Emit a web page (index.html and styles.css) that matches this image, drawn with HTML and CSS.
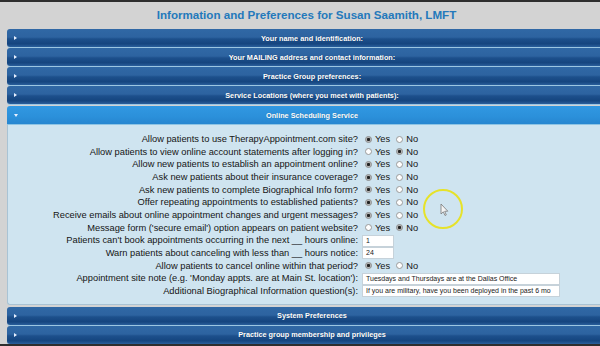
FILE: index.html
```html
<!DOCTYPE html>
<html>
<head>
<meta charset="utf-8">
<link rel="stylesheet" href="styles.css">
</head>
<body>
<div class="frame">
  <h1 class="title">Information and Preferences for Susan Saamith, LMFT</h1>
  <div class="accordion">
    <div class="bar"><span class="arrow"></span><span class="bar-text">Your name and identification:</span></div>
    <div class="bar"><span class="arrow"></span><span class="bar-text">Your MAILING address and contact information:</span></div>
    <div class="bar"><span class="arrow"></span><span class="bar-text">Practice Group preferences:</span></div>
    <div class="bar"><span class="arrow"></span><span class="bar-text">Service Locations (where you meet with patients):</span></div>
    <div class="bar active"><span class="arrow down"></span><span class="bar-text">Online Scheduling Service</span></div>
    <div class="panel">
      <div class="form">
        <div class="lbl">Allow patients to use TherapyAppointment.com site?</div>
        <div class="val"><span class="radio on"></span>Yes<span class="radio"></span>No</div>
        <div class="lbl">Allow patients to view online account statements after logging in?</div>
        <div class="val"><span class="radio"></span>Yes<span class="radio on"></span>No</div>
        <div class="lbl">Allow new patients to establish an appointment online?</div>
        <div class="val"><span class="radio on"></span>Yes<span class="radio"></span>No</div>
        <div class="lbl">Ask new patients about their insurance coverage?</div>
        <div class="val"><span class="radio on"></span>Yes<span class="radio"></span>No</div>
        <div class="lbl">Ask new patients to complete Biographical Info form?</div>
        <div class="val"><span class="radio on"></span>Yes<span class="radio"></span>No</div>
        <div class="lbl">Offer repeating appointments to established patients?</div>
        <div class="val"><span class="radio on"></span>Yes<span class="radio"></span>No</div>
        <div class="lbl">Receive emails about online appointment changes and urgent messages?</div>
        <div class="val"><span class="radio on"></span>Yes<span class="radio"></span>No</div>
        <div class="lbl">Message form ('secure email') option appears on patient website?</div>
        <div class="val"><span class="radio"></span>Yes<span class="radio on"></span>No</div>
        <div class="lbl">Patients can't book appointments occurring in the next __ hours online:</div>
        <div class="val"><span class="box small">1</span></div>
        <div class="lbl">Warn patients about canceling with less than __ hours notice:</div>
        <div class="val"><span class="box small">24</span></div>
        <div class="lbl">Allow patients to cancel online within that period?</div>
        <div class="val"><span class="radio on"></span>Yes<span class="radio"></span>No</div>
        <div class="lbl">Appointment site note (e.g. 'Monday appts. are at Main St. location'):</div>
        <div class="val"><span class="box wide">Tuesdays and Thursdays are at the Dallas Office</span></div>
        <div class="lbl">Additional Biographical Information question(s):</div>
        <div class="val"><span class="box wide">If you are military, have you been deployed in the past 6 mo</span></div>
      </div>
    </div>
    <div class="bar"><span class="arrow"></span><span class="bar-text">System Preferences</span></div>
    <div class="bar"><span class="arrow"></span><span class="bar-text">Practice group membership and privileges</span></div>
  </div>
  <div class="cursor">
    <svg width="44" height="44" viewBox="0 0 44 44">
      <circle cx="22" cy="22" r="19" fill="none" stroke="#e6e22a" stroke-width="2"/>
      <path d="M20 17 L20 27 L22.3 24.8 L24 28.5 L25.3 27.9 L23.7 24.3 L26.8 24.2 Z" fill="#f4f4f4" stroke="#777" stroke-width="0.8"/>
    </svg>
  </div>
</div>
</body>
</html>
```
FILE: styles.css
```css
html, body {
  margin: 0;
  padding: 0;
  width: 600px;
  height: 346px;
  overflow: hidden;
  background: #d3d3d3;
  font-family: "Liberation Sans", Arial, sans-serif;
}
.frame {
  position: relative;
  height: 342px;
  border-top: 2px solid #2e2e2e;
  border-bottom: 2px solid #2e2e2e;
  overflow: hidden;
}
.title {
  margin: 0;
  padding-left: 13px;
  height: 27px;
  line-height: 25px;
  text-align: center;
  font-size: 11.6px;
  font-weight: bold;
  color: #2479bb;
}
.accordion {
  margin-left: 7px;
  width: 620px;
  display: flex;
  flex-direction: column;
}
.bar {
  position: relative;
  height: 18px;
  margin-bottom: 1px;
  border-radius: 3px 0 0 3px;
  background: linear-gradient(#3068a5 0%, #2d63a0 45%, #1d508c 55%, #15457f 82%, #2a5f9c 100%);
  box-shadow: 0 1px 0 #9cc6e2;
  display: flex;
  align-items: center;
  justify-content: center;
}
.bar.active {
  margin-top: 1px;
  background: linear-gradient(#3198e2 0%, #2b90da 60%, #2786d0 100%);
  box-shadow: 0 1px 0 #8ec4e4;
  border-radius: 3px 0 0 0;
}
.bar-text {
  color: #fff;
  font-size: 7.3px;
  font-weight: bold;
  margin-right: 10px;
  text-shadow: 0 0 1px rgba(0,0,0,0.3);
}
.arrow {
  position: absolute;
  left: 7px;
  top: 7px;
  width: 0;
  height: 0;
  border-top: 2px solid transparent;
  border-bottom: 2px solid transparent;
  border-left: 3px solid #e8f0ff;
}
.arrow.down {
  top: 8px;
  border-left: 2px solid transparent;
  border-right: 2px solid transparent;
  border-top: 3px solid #e8f0ff;
  border-bottom: 0;
}
.panel {
  background: #cfe4f0;
  border-left: 1px solid #a9c3d4;
  border-bottom: 1px solid #a9c3d4;
  border-radius: 0 0 0 3px;
  padding: 8px 0 6px 0;
  margin-bottom: 2px;
}
.form {
  display: grid;
  grid-template-columns: 350px 1fr;
  column-gap: 4px;
  font-size: 9.3px;
  color: #151515;
}
.lbl {
  text-align: right;
  height: 12.67px;
  line-height: 12.67px;
  white-space: nowrap;
}
.val {
  height: 12.67px;
  line-height: 12.67px;
  display: flex;
  align-items: center;
  white-space: nowrap;
}
.radio {
  display: inline-block;
  width: 5px;
  height: 5px;
  border: 1px solid #9a9a9a;
  border-radius: 50%;
  background: #fff;
  margin: 0 3px 0 3px;
  box-sizing: content-box;
}
.val .radio:nth-of-type(2) {
  margin-left: 6px;
}
.radio.on {
  background: radial-gradient(circle, #222 0 1.3px, #aaa 1.8px, #ddd 3px);
  border-color: #888;
}
.box {
  display: inline-block;
  height: 10px;
  line-height: 10px;
  background: #fff;
  border: 1px solid #c6d2da;
  font-size: 7px;
  color: #222;
  padding: 0 3px;
  overflow: hidden;
  white-space: nowrap;
  box-sizing: content-box;
}
.box.small {
  width: 24px;
}
.box.wide {
  width: 190px;
}
.cursor {
  position: absolute;
  left: 421px;
  top: 185px;
  width: 44px;
  height: 44px;
}
```
